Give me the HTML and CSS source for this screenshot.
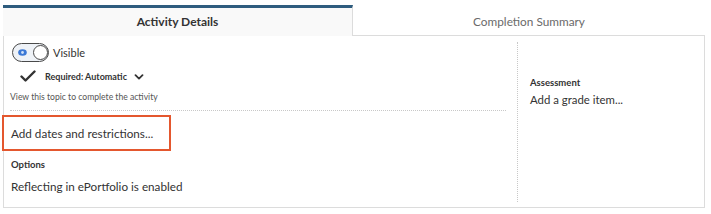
FILE: index.html
```html
<!DOCTYPE html>
<html>
<head>
<meta charset="utf-8">
<link rel="stylesheet" href="styles.css">
</head>
<body>
<div class="wrap">
  <div class="tabs">
    <div class="tab tab-active">Activity Details</div>
    <div class="tab tab-idle">Completion Summary</div>
  </div>
  <div class="panel">
    <div class="main">
      <div class="row-toggle">
        <span class="switch">
          <svg class="eye" width="9" height="7" viewBox="0 0 9 7"><ellipse cx="4.5" cy="3.5" rx="4.3" ry="3.2" fill="#3a78d6"/><circle cx="4.5" cy="3.5" r="1.4" fill="#cfe0f7"/></svg>
          <span class="knob"></span>
        </span>
        <span class="toggle-label">Visible</span>
      </div>
      <div class="row-required">
        <svg class="check" width="16" height="12" viewBox="0 0 16 12"><path d="M1.5 6.5 L5.5 10.5 L14.5 1.5" fill="none" stroke="#333" stroke-width="2.4" stroke-linecap="round" stroke-linejoin="round"/></svg>
        <span class="req-label">Required: Automatic</span>
        <svg class="chev" width="10" height="6" viewBox="0 0 10 6"><path d="M1.5 1.2 L5 4.6 L8.5 1.2" fill="none" stroke="#333" stroke-width="1.8" stroke-linecap="round" stroke-linejoin="round"/></svg>
      </div>
      <div class="hint">View this topic to complete the activity</div>
      <div class="sep"></div>
      <div class="highlight">Add dates and restrictions...</div>
      <div class="label">Options</div>
      <div class="body-text">Reflecting in ePortfolio is enabled</div>
    </div>
    <div class="side">
      <div class="label">Assessment</div>
      <div class="body-text side-link">Add a grade item...</div>
    </div>
  </div>
</div>
</body>
</html>
```
FILE: styles.css
```css
html, body {
  margin: 0;
  padding: 0;
  background: #fff;
}
body {
  font-family: Lato, "Open Sans", sans-serif;
  color: #333;
}
.wrap {
  margin: 5px 0 0 3px;
  width: 702px;
}
.tabs {
  display: flex;
  height: 31px;
}
.tab {
  display: flex;
  align-items: center;
  justify-content: center;
  box-sizing: border-box;
  font-size: 12px;
}
.tab-active {
  width: 350px;
  border-top: 3px solid #2e5c7e;
  border-right: 1px solid #dcdcdc;
  background: #f9f9f9;
  font-weight: 700;
  color: #333;
  padding-bottom: 1px;
}
.tab-idle {
  flex: 1;
  border-bottom: 1px solid #dcdcdc;
  color: #6a6a6a;
  padding-top: 2px;
  font-size: 11.8px;
}
.panel {
  display: flex;
  height: 172px;
  box-sizing: border-box;
  border: 1px solid #dcdcdc;
  border-top: none;
}
.main {
  width: 513px;
  padding-top: 7px;
  box-sizing: border-box;
}
.row-toggle {
  display: flex;
  align-items: center;
  height: 19px;
  padding-left: 8px;
}
.switch {
  display: flex;
  align-items: center;
  justify-content: space-between;
  box-sizing: border-box;
  width: 37px;
  height: 19px;
  border: 1.5px solid #4a4a4a;
  border-radius: 10px;
  background: #eef2f7;
  padding: 0 0.5px 0 5px;
}
.eye {
  display: block;
}
.knob {
  width: 15px;
  height: 15px;
  box-sizing: border-box;
  border: 1.5px solid #4a4a4a;
  border-radius: 50%;
  background: #fff;
}
.toggle-label {
  margin-left: 4px;
  font-size: 11px;
  color: #333;
}
.row-required {
  display: flex;
  align-items: center;
  height: 20px;
  margin-top: 4px;
  padding-left: 16px;
}
.check {
  display: block;
}
.req-label {
  margin-left: 9px;
  font-size: 9px;
  font-weight: 700;
  color: #333;
}
.chev {
  display: block;
  margin-left: 7px;
  margin-top: 2px;
}
.hint {
  margin-top: 4px;
  height: 14px;
  line-height: 14px;
  padding-left: 6px;
  font-size: 8.6px;
  color: #555;
}
.sep {
  margin: 6px 11px 0 6px;
  border-top: 1px dotted #c8c8c8;
}
.highlight {
  width: 169px;
  height: 36px;
  margin: 4px 0 0 -2px;
  box-sizing: border-box;
  border: 2px solid #e4572e;
  padding-left: 7px;
  display: flex;
  align-items: center;
  font-size: 11.7px;
  color: #333;
}
.label {
  margin-top: 7px;
  height: 14px;
  line-height: 14px;
  padding-left: 7px;
  font-size: 9.5px;
  font-weight: 700;
  color: #333;
}
.body-text {
  margin-top: 6px;
  height: 16px;
  line-height: 16px;
  padding-left: 7px;
  font-size: 11.7px;
  color: #333;
}
.side {
  flex: 1;
  margin: 6px 0 5px;
  border-left: 1px dotted #c8c8c8;
  padding: 27px 0 0 5px;
}
.side-link {
  margin-top: 2px;
  font-size: 11.4px;
}
```
